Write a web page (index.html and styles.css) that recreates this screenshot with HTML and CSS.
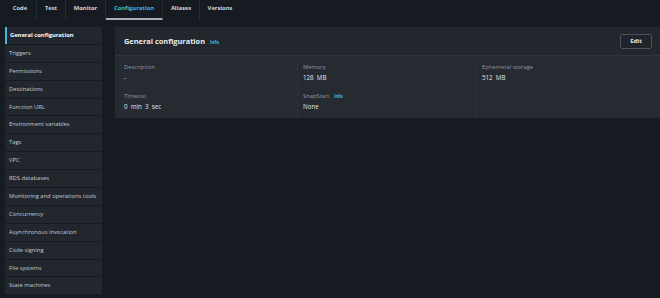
FILE: index.html
```html
<!DOCTYPE html>
<html lang="en">
<head>
    <meta charset="UTF-8">
    <meta name="viewport" content="width=device-width, initial-scale=1.0">
    <title>Configuration</title>
    <link rel="stylesheet" href="styles.css">
</head>
<body>
    <nav class="tabs">
        <a class="tab">Code</a>
        <a class="tab">Test</a>
        <a class="tab">Monitor</a>
        <a class="tab active">Configuration</a>
        <a class="tab">Aliases</a>
        <a class="tab">Versions</a>
    </nav>

    <div class="layout">
        <ul class="side-nav">
            <li class="active">General configuration</li>
            <li>Triggers</li>
            <li>Permissions</li>
            <li>Destinations</li>
            <li>Function URL</li>
            <li>Environment variables</li>
            <li>Tags</li>
            <li>VPC</li>
            <li>RDS databases</li>
            <li>Monitoring and operations tools</li>
            <li>Concurrency</li>
            <li>Asynchronous invocation</li>
            <li>Code signing</li>
            <li>File systems</li>
            <li>State machines</li>
        </ul>

        <section class="panel">
            <div class="panel-header">
                <h2>General configuration <span class="info">Info</span></h2>
                <button class="btn">Edit</button>
            </div>
            <div class="panel-body">
                <div class="col">
                    <div class="field">
                        <div class="label">Description</div>
                        <div class="value">-</div>
                    </div>
                    <div class="field">
                        <div class="label">Timeout</div>
                        <div class="value">0&nbsp; min &nbsp;3&nbsp; sec</div>
                    </div>
                </div>
                <div class="col">
                    <div class="field">
                        <div class="label">Memory</div>
                        <div class="value">128&nbsp; MB</div>
                    </div>
                    <div class="field">
                        <div class="label">SnapStart <span class="info">Info</span></div>
                        <div class="value">None</div>
                    </div>
                </div>
                <div class="col">
                    <div class="field">
                        <div class="label">Ephemeral storage</div>
                        <div class="value">512&nbsp; MB</div>
                    </div>
                </div>
            </div>
        </section>
    </div>
</body>
</html>
```

FILE: styles.css
```css
body {
    margin: 0;
    background-color: #161a21;
    font-family: "Open Sans", "Noto Sans", Arial, sans-serif;
    color: #d1d5db;
    overflow: hidden;
}
.tabs {
    display: grid;
    grid-template-columns: 33px 29px 40px 57px 37px 40px;
    height: 27px;
    padding-left: 4px;
}
.tab {
    text-align: center;
    line-height: 17px;
    height: 20px;
    font-size: 5.8px;
    font-weight: bold;
    color: #d1d5db;
    border-right: 1px solid #262b33;
    box-sizing: border-box;
    white-space: nowrap;
}
.tabs .tab:last-child {
    border-right: none;
}
.tab.active {
    color: #44b9d6;
    border-bottom: 2px solid #a5adb8;
}
.layout {
    display: flex;
    gap: 13px;
    padding-left: 5px;
}
.side-nav {
    list-style: none;
    margin: 0;
    padding: 0;
    width: 97px;
    flex-shrink: 0;
}
.side-nav li {
    height: 16.9px;
    line-height: 17px;
    padding-left: 4px;
    margin-bottom: 1px;
    font-size: 5.8px;
    color: #c6ccd4;
    background-color: #22262d;
    white-space: nowrap;
}
.side-nav li.active {
    font-weight: bold;
    color: #ffffff;
    border-left: 2px solid #44b9d6;
    padding-left: 3px;
}
.panel {
    flex: 1;
    margin-right: -8px;
    background-color: #262a31;
    height: 91px;
    align-self: flex-start;
}
.panel-header {
    display: flex;
    align-items: center;
    justify-content: space-between;
    height: 28px;
    padding: 0 16px 0 9px;
    background-color: #22262d;
    border-bottom: 1px solid #30353d;
}
h2 {
    margin: 0;
    font-size: 7.4px;
    font-weight: bold;
    color: #e9ebed;
}
.info {
    margin-left: 3px;
    font-size: 4.5px;
    font-weight: bold;
    color: #44b9d6;
    vertical-align: middle;
}
.btn {
    background-color: #1f232a;
    border: 1px solid #4b525c;
    border-radius: 2px;
    color: #e9ebed;
    font-family: inherit;
    font-size: 6px;
    font-weight: bold;
    width: 32px;
    height: 15px;
    padding: 0;
}
.panel-body {
    display: flex;
    padding: 7px 0 0 4px;
}
.col {
    width: 179px;
    flex-shrink: 0;
    box-sizing: border-box;
    padding-left: 5px;
    border-right: 1px solid #2d3139;
    height: 56px;
}
.col:last-child {
    border-right: none;
}
.field {
    margin-bottom: 9px;
}
.label {
    font-size: 5.8px;
    color: #8d99a8;
    line-height: 9px;
}
.value {
    font-size: 6.2px;
    color: #e3e6ea;
    line-height: 11px;
}
```
